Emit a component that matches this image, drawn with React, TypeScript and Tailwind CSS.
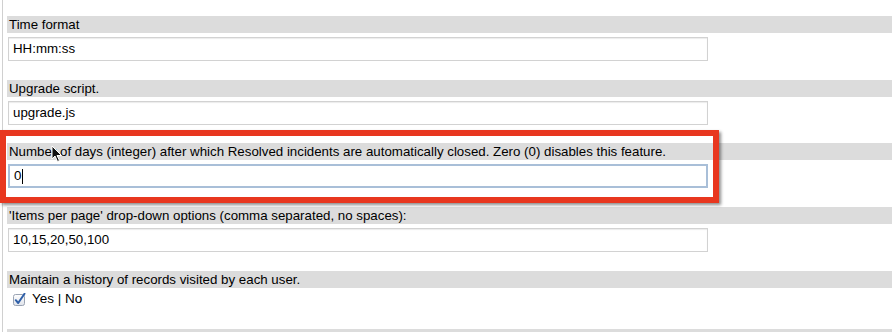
import React from "react";

const font = { fontFamily: '"Liberation Sans", Arial, Helvetica, sans-serif' };

function Field({ label, value, focused, gapAfter }: { label: string; value: string; focused?: boolean; gapAfter: string }) {
  return (
    <div className={gapAfter}>
      <div className="h-[17px] bg-[#dcdcdc] pl-[2px] text-[13.3px] leading-[18px] text-black">{label}</div>
      <div
        className={`mt-[4px] ml-[1px] h-[24px] w-[700px] bg-white pl-[4px] text-[13.3px] leading-[22px] text-black flex items-center ${
          focused ? "border-2 border-[#a9bfd8]" : "border border-[#d2d2d2] shadow-[inset_0_1px_1px_rgba(0,0,0,0.08)]"
        }`}
      >
        <span>{value}</span>
        {focused && <span className="ml-[1px] inline-block h-[15px] w-[1px] bg-black" />}
      </div>
    </div>
  );
}

export default function App() {
  return (
    <div className="relative h-[332px] w-[892px] overflow-hidden bg-white" style={font}>
      <div className="ml-[2px] h-full border-l border-[#d0d0d0] pl-[4px] pt-[16px]">
        <Field label="Time format" value="HH:mm:ss" gapAfter="mb-[19px]" />
        <Field label="Upgrade script." value="upgrade.js" gapAfter="mb-[18px]" />
        <Field
          label="Number of days (integer) after which Resolved incidents are automatically closed. Zero (0) disables this feature."
          value="0"
          focused
          gapAfter="mb-[19px]"
        />
        <Field
          label="'Items per page' drop-down options (comma separated, no spaces):"
          value="10,15,20,50,100"
          gapAfter="mb-[19px]"
        />
        <div>
          <div className="h-[17px] bg-[#dcdcdc] pl-[2px] text-[13.3px] leading-[18px] text-black">
            Maintain a history of records visited by each user.
          </div>
          <div className="flex h-[22px] items-center pl-[6px] text-[13.5px] text-black">
            <svg width="13" height="13" viewBox="0 0 13 13" className="mr-[6px]">
              <defs>
                <linearGradient id="cb" x1="0" y1="0" x2="0" y2="1">
                  <stop offset="0" stopColor="#ffffff" />
                  <stop offset="1" stopColor="#dfe3ea" />
                </linearGradient>
              </defs>
              <rect x="0.5" y="1.5" width="11" height="11" rx="2" fill="url(#cb)" stroke="#9aa3b3" />
              <path d="M2.8 7.2 L5.2 10 L11.5 0.8" fill="none" stroke="#2f5fa8" strokeWidth="2" strokeLinecap="round" strokeLinejoin="round" />
            </svg>
            <span>Yes | No</span>
          </div>
          <div className="mt-[19px] h-[17px] bg-[#dcdcdc]" />
        </div>
      </div>

      {/* red highlight annotation */}
      <div className="pointer-events-none absolute left-0 top-[130px] h-[73px] w-[719px] border-[6px] border-[#e8371f] shadow-[2px_2px_3px_rgba(0,0,0,0.45)]" />

      {/* mouse pointer */}
      <svg className="absolute left-[51px] top-[145px]" width="12" height="18" viewBox="0 0 12 18">
        <path d="M1 1 L1 14 L4 11 L6.5 16.5 L8.5 15.5 L6 10.5 L10.5 10.5 Z" fill="#111" stroke="#fff" strokeWidth="1" strokeLinejoin="round" />
      </svg>
    </div>
  );
}
